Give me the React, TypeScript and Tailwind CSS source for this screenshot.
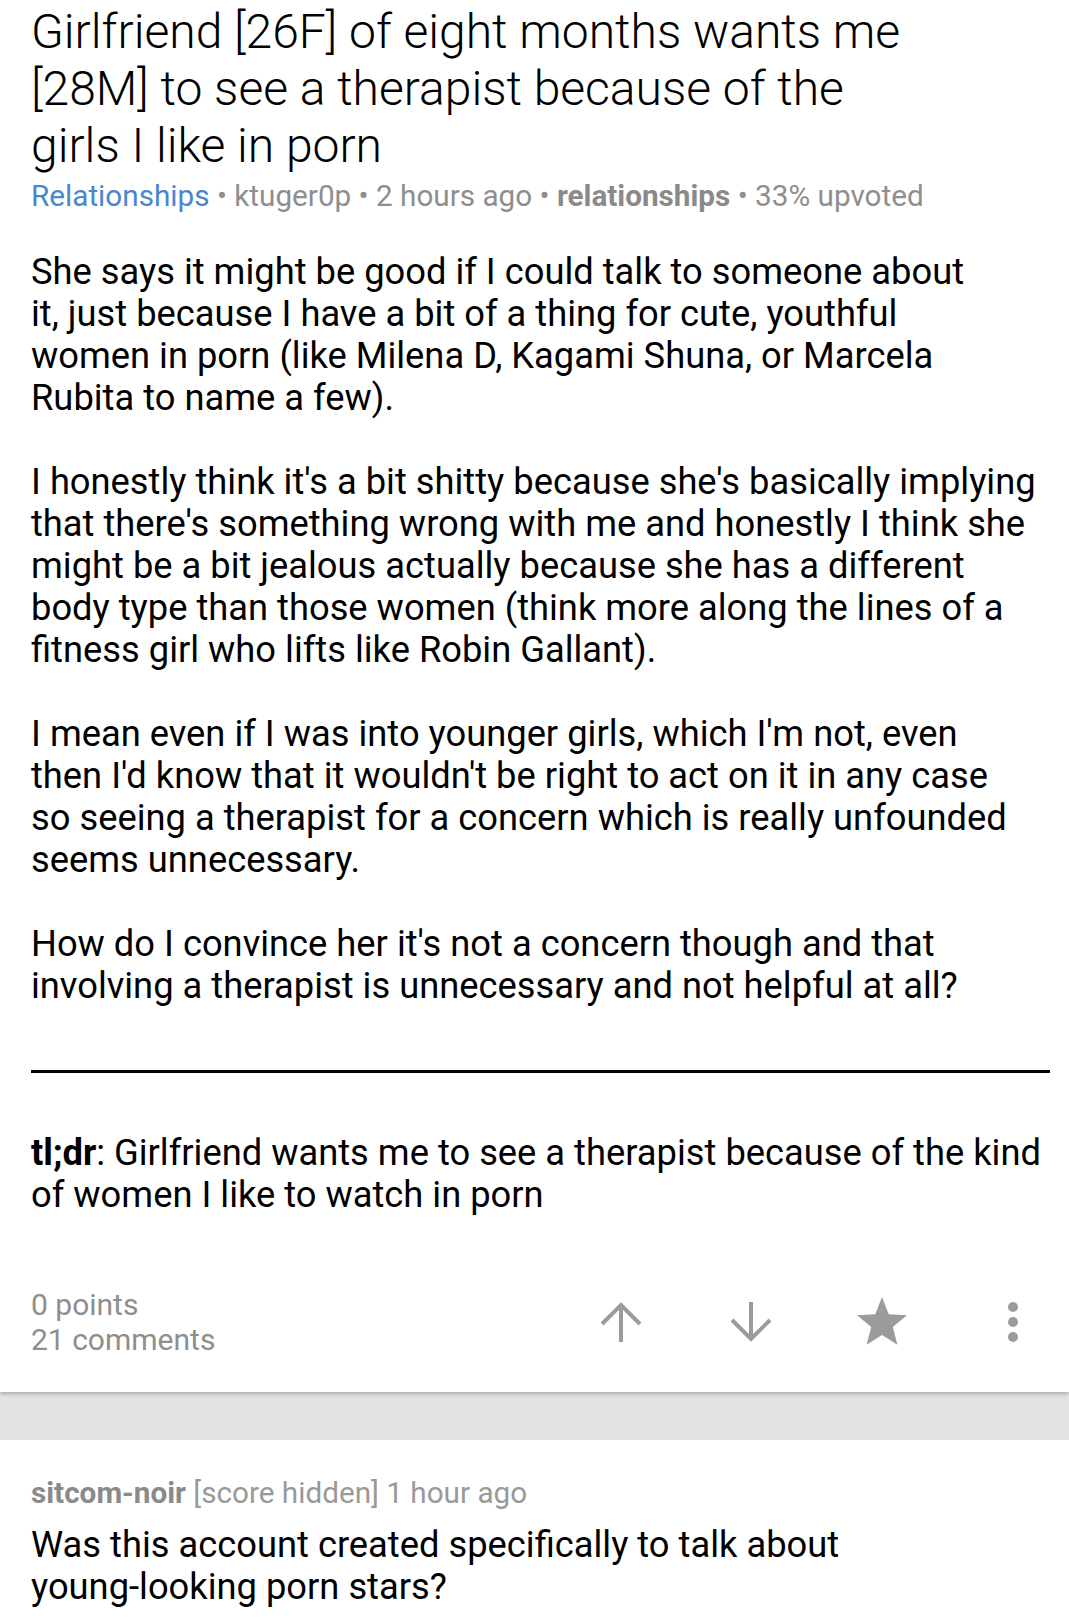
import React from 'react';

const TITLE_LINES = [
  "Girlfriend [26F] of eight months wants me",
  "[28M] to see a therapist because of the",
  "girls I like in porn",
];

const PARAGRAPHS = [
  [
    "She says it might be good if I could talk to someone about",
    "it, just because I have a bit of a thing for cute, youthful",
    "women in porn (like Milena D, Kagami Shuna, or Marcela",
    "Rubita to name a few).",
  ],
  [
    "I honestly think it's a bit shitty because she's basically implying",
    "that there's something wrong with me and honestly I think she",
    "might be a bit jealous actually because she has a different",
    "body type than those women (think more along the lines of a",
    "fitness girl who lifts like Robin Gallant).",
  ],
  [
    "I mean even if I was into younger girls, which I'm not, even",
    "then I'd know that it wouldn't be right to act on it in any case",
    "so seeing a therapist for a concern which is really unfounded",
    "seems unnecessary.",
  ],
  [
    "How do I convince her it's not a concern though and that",
    "involving a therapist is unnecessary and not helpful at all?",
  ],
];

// keeps the app's line breaks
const Lines: React.FC<{ lines: string[] }> = ({ lines }) => (
  <>
    {lines.map((l, i) => (
      <span key={i} className="block whitespace-nowrap">{l}</span>
    ))}
  </>
);

const UpArrow = () => (
  <svg width="50" height="40" viewBox="0 0 50 40" fill="none" stroke="#9b9b9b" strokeWidth={4}>
    <path d="M25 40V3" />
    <path d="M6 22L25 3l19 19" />
  </svg>
);

const DownArrow = () => (
  <svg width="50" height="40" viewBox="0 0 50 40" fill="none" stroke="#9b9b9b" strokeWidth={4}>
    <path d="M25 0v37" />
    <path d="M6 18l19 19 19-19" />
  </svg>
);

const Star = () => (
  <svg width="52" height="50" viewBox="0 0 24 23" fill="#9b9b9b">
    <path d="M12 0l3.1 7.9 8.4.5-6.5 5.4 2.1 8.2L12 17.5 4.9 22l2.1-8.2L.5 8.4l8.4-.5z" />
  </svg>
);

const MoreDots = () => (
  <div className="flex h-[40px] w-[50px] flex-col items-center justify-between">
    <span className="h-[10px] w-[10px] rounded-full bg-[#9b9b9b]" />
    <span className="h-[10px] w-[10px] rounded-full bg-[#9b9b9b]" />
    <span className="h-[10px] w-[10px] rounded-full bg-[#9b9b9b]" />
  </div>
);

const App: React.FC = () => {
  return (
    <div className="min-h-[1623px] w-[1069px] bg-white font-['Roboto',sans-serif] text-black">
      <div className="relative z-10 bg-white shadow-[0_2px_4px_rgba(0,0,0,0.25)]">
        <div className="px-[31px] pt-[3px]">
          <h1 className="text-[48px] font-light leading-[57px]">
            <Lines lines={TITLE_LINES} />
          </h1>
          <div className="mt-[4px] whitespace-nowrap text-[29.7px] leading-[36px] text-[#8e8e8e]">
            <span className="text-[#4a86cf]">Relationships</span>
            <span> • ktuger0p • 2 hours ago • </span>
            <span className="font-bold text-[#8a8a8a]">relationships</span>
            <span> • 33% upvoted</span>
          </div>

          <div className="mt-[37px] text-[36.3px] leading-[42px]">
            {PARAGRAPHS.map((p, i) => (
              <p key={i} className="mb-[42px] last:mb-0">
                <Lines lines={p} />
              </p>
            ))}
          </div>

          <hr className="mt-[63px] mr-[-12px] border-0 border-t-[3px] border-black" />

          <p className="mt-[59px] text-[36.3px] leading-[42px]">
            <span className="block whitespace-nowrap">
              <span className="font-bold">tl;dr</span>: Girlfriend wants me to see a therapist because of the kind
            </span>
            <span className="block whitespace-nowrap">of women I like to watch in porn</span>
          </p>
        </div>

        <div className="flex items-center justify-between px-[31px] pb-[35px] pt-[71px]">
          <div className="text-[30px] leading-[35px] text-[#8e8e8e]">
            <div>0 points</div>
            <div>21 comments</div>
          </div>
          <div className="flex items-center gap-[80px]">
            <UpArrow />
            <DownArrow />
            <Star />
            <MoreDots />
          </div>
        </div>
      </div>

      <div className="h-[48px] bg-[#e3e3e3]" />

      <div className="px-[31px] pt-[35px]">
        <div className="whitespace-nowrap text-[29.7px] leading-[36px] text-[#999999]">
          <span className="font-bold text-[#8a8a8a]">sitcom-noir</span> [score hidden] 1 hour ago
        </div>
        <p className="mt-[13px] text-[36.3px] leading-[42px]">
          <Lines lines={["Was this account created specifically to talk about", "young-looking porn stars?"]} />
        </p>
      </div>
    </div>
  );
};

export default App;
